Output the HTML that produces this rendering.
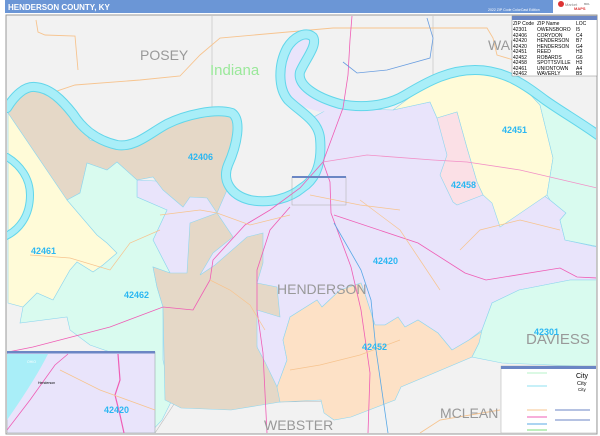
<!DOCTYPE html>
<html><head><meta charset="utf-8"><style>
html,body{margin:0;padding:0;width:600px;height:436px;overflow:hidden;background:#fff;font-family:"Liberation Sans",sans-serif}
</style></head><body>
<svg width="600" height="436" viewBox="0 0 600 436" xmlns="http://www.w3.org/2000/svg" font-family="Liberation Sans, sans-serif">
<rect x="0" y="0" width="600" height="436" fill="#fff"/>
<rect x="5" y="0" width="548" height="13" fill="#6b96d6"/>
<text x="8" y="10" font-size="8" font-weight="bold" fill="#fff">HENDERSON COUNTY, KY</text>
<text x="488" y="11" font-size="3.5" fill="#fff">2022 ZIP Code ColorCast Edition</text>
<rect x="555" y="0" width="45" height="13" fill="#fff"/>
<circle cx="561" cy="4" r="3" fill="#d33"/>
<text x="565" y="6" font-size="4" fill="#888">Market</text>
<text x="574" y="10" font-size="4" font-weight="bold" fill="#d33">MAPS</text>
<text x="584" y="5" font-size="3" fill="#666">800-</text>
<rect x="6" y="15" width="591" height="419" fill="#f2f2f2" stroke="#999" stroke-width="1"/>
<clipPath id="c"><rect x="7" y="16" width="589" height="417"/></clipPath>
<g clip-path="url(#c)">
<g stroke="#bbb" stroke-width="0.6" fill="none">
<path d="M212 16 L212 116"/><path d="M433 16 L433 100"/><path d="M565 110 L560 330"/>
<path d="M155 433 L180 395"/><path d="M280 402 L395 400"/>
</g>
<g stroke="#f7c48f" stroke-width="0.9" fill="none">
<path d="M8 100 L45 95 L75 85 L140 80 L180 76 L200 55 L220 38 L333 28 L487 28 L493 38 L497 55 L540 68 L590 75"/>
<path d="M36 20 L38 32 L45 35 L75 36 L78 70"/>
<path d="M420 433 L440 420 L500 410"/>
</g>
<!-- Purple base -->
<path d="M137 180 L230 185 L240 200 L265 205 L290 198 L310 187 L320 165 L322 135 L312 118 L330 108 L393 110 L430 102 L437 118 L457 112 L480 150 L550 200 L566 213 L560 220 L565 240 L597 247 L597 280 L570 280 L519 290 L492 303 L482 330 L469 340 L452 350 L438 333 L418 320 L405 327 L398 317 L385 325 L375 325 L366 297 L361 283 L340 290 L322 307 L317 300 L290 317 L283 340 L287 360 L277 387 L280 402 L265 400 L250 300 L200 280 L170 273 L153 240 L167 210 L137 197 Z" fill="#e9e4fb" stroke="#8fd6ee" stroke-width="0.6"/>
<!-- lens -->
<path d="M283 58 L297 38 L312 40 L305 60 L298 75 L305 90 L330 100 L350 108 L320 112 L300 106 L285 95 L279 80 Z" fill="#e9e4fb"/>
<!-- Tan north -->
<path d="M8 100 L33 90 L53 96 L73 116 L90 140 L117 146 L140 140 L167 126 L200 116 L230 115 L237 125 L234 143 L224 167 L227 190 L217 213 L207 198 L190 197 L183 207 L163 190 L153 177 L137 180 L117 162 L107 170 L87 163 L80 193 L67 200 L8 113 Z" fill="#e5d8c7" stroke="#8fd6ee" stroke-width="0.6"/>
<!-- Yellow 42461 -->
<path d="M8 113 L67 200 L97 235 L107 243 L117 253 L103 265 L93 272 L77 262 L70 270 L53 300 L37 293 L23 307 L8 303 Z" fill="#fffbd8" stroke="#8fd6ee" stroke-width="0.6"/>
<!-- Mint 42462 -->
<path d="M67 200 L80 193 L87 163 L107 170 L117 162 L137 180 L137 197 L167 210 L153 240 L170 273 L153 267 L157 287 L163 307 L163 360 L172 400 L162 420 L150 433 L120 433 L110 352 L90 345 L70 330 L67 317 L20 323 L23 307 L37 293 L53 300 L70 270 L77 262 L93 272 L103 265 L117 253 L107 243 L97 235 Z" fill="#d9fbef" stroke="#8fd6ee" stroke-width="0.6"/>
<!-- Tan south -->
<path d="M190 223 L217 213 L233 237 L213 253 L200 275 L215 265 L247 237 L263 233 L263 263 L257 283 L277 287 L280 317 L257 310 L257 347 L265 362 L280 393 L280 402 L231 410 L181 408 L165 400 L163 307 L157 287 L153 267 L170 273 L187 273 Z" fill="#e5d8c7" stroke="#8fd6ee" stroke-width="0.6"/>
<!-- Orange 42452 -->
<path d="M290 317 L317 300 L322 307 L340 290 L361 283 L366 297 L375 325 L385 325 L398 317 L405 327 L418 320 L438 333 L452 350 L469 340 L484 330 L479 343 L472 357 L401 387 L395 400 L351 417 L334 420 L324 413 L321 400 L280 402 L277 387 L287 360 L283 340 Z" fill="#fde1c6" stroke="#8fd6ee" stroke-width="0.6"/>
<!-- Yellow 42451 -->
<path d="M393 110 L433 80 L467 72 L500 75 L528 92 L540 105 L553 158 L547 195 L500 227 L492 203 L483 195 L477 182 L467 148 L457 112 L437 118 L430 102 Z" fill="#fffbd8" stroke="#8fd6ee" stroke-width="0.6"/>
<!-- Pink 42458 -->
<path d="M437 118 L457 112 L467 148 L477 182 L483 195 L457 205 L453 202 L440 175 L447 155 Z" fill="#fbe0e6" stroke="#8fd6ee" stroke-width="0.6"/>
<!-- Mint 42301 -->
<path d="M528 92 L567 112 L600 130 L600 247 L565 240 L560 220 L566 213 L550 200 L547 195 L553 158 L540 105 Z" fill="#d9fbef" stroke="#8fd6ee" stroke-width="0.6"/>
<path d="M597 280 L570 280 L519 290 L492 303 L482 330 L479 343 L472 357 L502 363 L600 367 Z" fill="#d9fbef" stroke="#8fd6ee" stroke-width="0.6"/>
<!-- river -->
<g fill="none" stroke-linecap="round" stroke-linejoin="round">
<path d="M7 108 C15 95 25 86 35 87 C50 88 62 100 73 114 C82 128 95 140 117 145 C135 148 150 133 167 124 C185 115 215 108 232 113 C242 120 237 145 228 165 C222 180 230 195 250 200 C270 204 290 198 302 188 C318 178 322 160 320 138 C318 120 300 112 288 100 C278 88 278 65 287 48 C293 38 305 30 313 37 C318 45 305 60 300 72 C297 85 315 97 340 104 C360 108 385 107 405 95 C430 80 450 70 475 70 C505 70 525 85 545 100 C565 114 580 122 602 138" stroke="#62d6ea" stroke-width="10"/>
<path d="M7 157 C20 165 30 178 30 195 C30 215 20 230 4 237" stroke="#62d6ea" stroke-width="8"/>
<path d="M7 108 C15 95 25 86 35 87 C50 88 62 100 73 114 C82 128 95 140 117 145 C135 148 150 133 167 124 C185 115 215 108 232 113 C242 120 237 145 228 165 C222 180 230 195 250 200 C270 204 290 198 302 188 C318 178 322 160 320 138 C318 120 300 112 288 100 C278 88 278 65 287 48 C293 38 305 30 313 37 C318 45 305 60 300 72 C297 85 315 97 340 104 C360 108 385 107 405 95 C430 80 450 70 475 70 C505 70 525 85 545 100 C565 114 580 122 602 138" stroke="#a9eef8" stroke-width="8"/>
<path d="M7 157 C20 165 30 178 30 195 C30 215 20 230 4 237" stroke="#a9eef8" stroke-width="6"/>
</g>
<!-- roads -->
<g fill="none" stroke-width="0.8">
<path d="M352 16 L350 40 L348 75 L343 108 L333 135 L323 162 L300 188 L270 210 L245 225 L213 260 L210 280 L193 310 L163 307 L110 327 L33 347 L8 352" stroke="#ef5db5"/>
<path d="M323 162 L330 182 L331 213 L351 267 L361 310 L370 373 L368 433" stroke="#ef5db5"/>
<path d="M334 215 L418 243 L465 273 L486 280 L560 268 L577 277 L597 278" stroke="#ef5db5"/>
<path d="M323 162 L367 155 L433 160 L467 162 L520 170 L597 188" stroke="#f28fc6"/>
<path d="M290 207 L270 230 L257 270 L257 310 L263 353 L267 433" stroke="#ef5db5"/>
<path d="M334 223 L361 270 L371 300 L376 350 L388 433" stroke="#58a8e6"/>
<path d="M343 62 L357 73 L387 70 L430 58 L433 38 L427 18" stroke="#6a9ee0"/>
</g>
<g fill="none" stroke="#f7c48f" stroke-width="0.7">
<path d="M160 215 L200 210 L217 213 L250 225 L290 215"/>
<path d="M210 280 L230 290 L250 305 L265 330"/>
<path d="M360 200 L400 230 L420 260 L440 290"/>
<path d="M460 250 L480 230 L520 220 L560 230"/>
<path d="M290 370 L320 365 L360 355 L400 340"/>
<path d="M310 195 L360 205 L400 210"/>
<path d="M30 255 L70 258 L110 270 L130 243 L160 230"/>
</g>
<rect x="292" y="177" width="54" height="28" fill="none" stroke="#aaa" stroke-width="0.5"/>
<rect x="292" y="176" width="54" height="2" fill="#6b86c4"/>
<text x="140" y="60" font-size="14" fill="#999">POSEY</text>
<text x="210" y="75" font-size="15" fill="#9ae89a">Indiana</text>
<text x="488" y="50" font-size="14" fill="#999">WAR</text>
<text x="277" y="294" font-size="14" fill="#999">HENDERSON</text>
<text x="526" y="344" font-size="15" fill="#999">DAVIESS</text>
<text x="64" y="390" font-size="14" fill="#999">UNION</text>
<text x="264" y="430" font-size="14" fill="#999">WEBSTER</text>
<text x="440" y="418" font-size="14" fill="#999">MCLEAN</text>
<g font-size="9" font-weight="bold" fill="#2bb7f2">
<text x="188" y="160">42406</text>
<text x="502" y="133">42451</text>
<text x="451" y="188">42458</text>
<text x="31" y="254">42461</text>
<text x="124" y="298">42462</text>
<text x="373" y="264">42420</text>
<text x="362" y="350">42452</text>
<text x="534" y="335">42301</text>
</g>
<rect x="7" y="352" width="148" height="81" fill="#e9e4fb" stroke="#9aa" stroke-width="0.6"/>
<rect x="7" y="351" width="148" height="2.5" fill="#6b86c4"/>
<path d="M7 354 L48 354 Q35 380 7 420 Z" fill="#a9eef8"/>
<path d="M7 430 L30 400 L55 365 L68 354" stroke="#ef5db5" stroke-width="0.8" fill="none"/>
<path d="M118 354 L120 380 L115 395 L120 415 L124 433" stroke="#ef5db5" stroke-width="1.2" fill="none"/>
<path d="M60 370 L100 390 L155 410" stroke="#f7c48f" stroke-width="0.8" fill="none"/>
<text x="27" y="363" font-size="3.5" fill="#fff">OHIO</text>
<text x="38" y="384" font-size="3.5" fill="#000">Henderson</text>
<text x="104" y="413" font-size="9" font-weight="bold" fill="#2bb7f2">42420</text>
<rect x="501" y="366" width="96" height="67" fill="#fff" stroke="#aaa" stroke-width="0.5"/>
<rect x="501" y="366" width="96" height="3" fill="#6b86c4"/>
<g stroke-width="1" fill="none">
<path d="M527 373 L547 373" stroke="#b7f3c8"/>
<path d="M527 386 L547 386" stroke="#8fe0f0"/>
<path d="M527 410 L547 410" stroke="#f7c48f"/>
<path d="M527 417 L547 417" stroke="#ef5db5"/>
<path d="M527 424 L547 424" stroke="#58a8e6"/>
<path d="M527 430 L547 430" stroke="#7ede7e"/>
<path d="M555 410 L590 410" stroke="#6b86c4"/>
<path d="M555 420 L590 420" stroke="#6b86c4"/>
</g>
<text x="576" y="378" font-size="7" fill="#000">City</text>
<text x="577" y="385" font-size="5.5" fill="#000">City</text>
<text x="578" y="391" font-size="4.5" fill="#000">City</text>
</g>
<rect x="512" y="16" width="85" height="60" fill="#fff" stroke="#888" stroke-width="0.5"/>
<rect x="512" y="16" width="85" height="4" fill="#6b86c4"/>
<g font-size="5" fill="#000">
<text x="513" y="25">ZIP Code</text><text x="537" y="25">ZIP Name</text><text x="576" y="25">LOC</text>
<text x="513" y="31">42301</text><text x="537" y="31">OWENSBORO</text><text x="576" y="31">I5</text>
<text x="513" y="37">42406</text><text x="537" y="37">CORYDON</text><text x="576" y="37">C4</text>
<text x="513" y="42">42420</text><text x="537" y="42">HENDERSON</text><text x="576" y="42">B7</text>
<text x="513" y="48">42420</text><text x="537" y="48">HENDERSON</text><text x="576" y="48">G4</text>
<text x="513" y="53">42451</text><text x="537" y="53">REED</text><text x="576" y="53">H3</text>
<text x="513" y="59">42452</text><text x="537" y="59">ROBARDS</text><text x="576" y="59">G6</text>
<text x="513" y="64">42458</text><text x="537" y="64">SPOTTSVILLE</text><text x="576" y="64">H3</text>
<text x="513" y="70">42461</text><text x="537" y="70">UNIONTOWN</text><text x="576" y="70">A4</text>
<text x="513" y="75">42462</text><text x="537" y="75">WAVERLY</text><text x="576" y="75">B5</text>
</g>
</svg>
</body></html>
